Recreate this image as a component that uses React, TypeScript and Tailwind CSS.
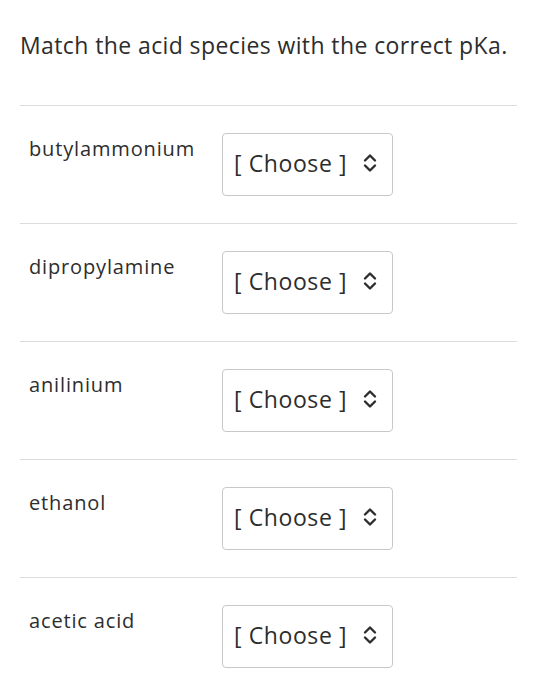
const species = ["butylammonium", "dipropylamine", "anilinium", "ethanol", "acetic acid"];

function UpDown() {
  return (
    <svg width="14" height="20" viewBox="0 0 14 20" fill="none" stroke="#2d2d2d" strokeWidth="2.4" strokeLinecap="round" strokeLinejoin="round">
      <path d="M2 7.5 L7 2.5 L12 7.5" />
      <path d="M2 12.5 L7 17.5 L12 12.5" />
    </svg>
  );
}

export default function App() {
  return (
    <div className="w-[534px] h-[700px] bg-white px-5 pt-[29px] text-[#2d2d2d]" style={{ fontFamily: "'Open Sans', sans-serif" }}>
      <h1 className="text-[23px] leading-[32px] font-normal tracking-[0.4px] whitespace-nowrap">Match the acid species with the correct pKa.</h1>

      <div className="mt-[44px] w-[497px]">
        {species.map((name) => (
          <div key={name} className="border-t border-[#dcdcdc] h-[118px] flex items-start pl-[9px]">
            <div className="w-[193px] pt-[30px] text-[20px] leading-[26px] tracking-[0.85px]">{name}</div>
            <div className="mt-[27px] w-[171px] h-[63px] border border-[#c8c8c8] rounded-[4px] flex items-center justify-between pl-[11px] pr-[15px] pb-[3px]">
              <span className="text-[23px] leading-[28px] tracking-[0.6px]">[ Choose ]</span>
              <UpDown />
            </div>
          </div>
        ))}
      </div>
    </div>
  );
}
